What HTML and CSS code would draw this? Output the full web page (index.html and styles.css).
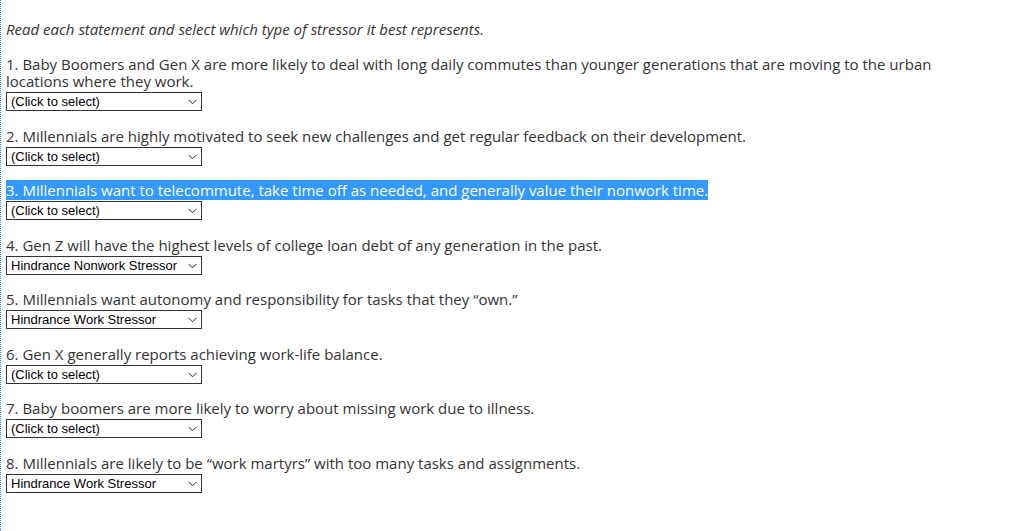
FILE: index.html
```html
<!DOCTYPE html>
<html lang="en">
<head>
  <meta charset="UTF-8" />
  <meta name="viewport" content="width=device-width, initial-scale=1.0" />
  <title>Stressor Types</title>
  <link rel="stylesheet" href="styles.css">
</head>
<body>
  <div class="question-area">
    <p class="intro">Read each statement and select which type of stressor it best represents.</p>

    <div class="question">
      <div class="q-text">1. Baby Boomers and Gen X are more likely to deal with long daily commutes than younger generations that are moving to the urban locations where they work.</div>
      <span class="dropdown">
        <select>
          <option selected>(Click to select)</option>
          <option>Challenge Work Stressor</option>
          <option>Hindrance Work Stressor</option>
          <option>Challenge Nonwork Stressor</option>
          <option>Hindrance Nonwork Stressor</option>
        </select>
        <svg class="chevron" width="9" height="6" viewBox="0 0 9 6"><path d="M0.5 0.8 L4.5 4.8 L8.5 0.8" fill="none" stroke="#222" stroke-width="1"/></svg>
      </span>
    </div>

    <div class="question">
      <div class="q-text">2. Millennials are highly motivated to seek new challenges and get regular feedback on their development.</div>
      <span class="dropdown">
        <select>
          <option selected>(Click to select)</option>
          <option>Challenge Work Stressor</option>
          <option>Hindrance Work Stressor</option>
          <option>Challenge Nonwork Stressor</option>
          <option>Hindrance Nonwork Stressor</option>
        </select>
        <svg class="chevron" width="9" height="6" viewBox="0 0 9 6"><path d="M0.5 0.8 L4.5 4.8 L8.5 0.8" fill="none" stroke="#222" stroke-width="1"/></svg>
      </span>
    </div>

    <div class="question">
      <div class="q-text"><span class="picked">3. Millennials want to telecommute, take time off as needed, and generally value their nonwork time.</span></div>
      <span class="dropdown">
        <select>
          <option selected>(Click to select)</option>
          <option>Challenge Work Stressor</option>
          <option>Hindrance Work Stressor</option>
          <option>Challenge Nonwork Stressor</option>
          <option>Hindrance Nonwork Stressor</option>
        </select>
        <svg class="chevron" width="9" height="6" viewBox="0 0 9 6"><path d="M0.5 0.8 L4.5 4.8 L8.5 0.8" fill="none" stroke="#222" stroke-width="1"/></svg>
      </span>
    </div>

    <div class="question">
      <div class="q-text">4. Gen Z will have the highest levels of college loan debt of any generation in the past.</div>
      <span class="dropdown">
        <select>
          <option>(Click to select)</option>
          <option>Challenge Work Stressor</option>
          <option>Hindrance Work Stressor</option>
          <option>Challenge Nonwork Stressor</option>
          <option selected>Hindrance Nonwork Stressor</option>
        </select>
        <svg class="chevron" width="9" height="6" viewBox="0 0 9 6"><path d="M0.5 0.8 L4.5 4.8 L8.5 0.8" fill="none" stroke="#222" stroke-width="1"/></svg>
      </span>
    </div>

    <div class="question">
      <div class="q-text">5. Millennials want autonomy and responsibility for tasks that they “own.”</div>
      <span class="dropdown">
        <select>
          <option>(Click to select)</option>
          <option>Challenge Work Stressor</option>
          <option selected>Hindrance Work Stressor</option>
          <option>Challenge Nonwork Stressor</option>
          <option>Hindrance Nonwork Stressor</option>
        </select>
        <svg class="chevron" width="9" height="6" viewBox="0 0 9 6"><path d="M0.5 0.8 L4.5 4.8 L8.5 0.8" fill="none" stroke="#222" stroke-width="1"/></svg>
      </span>
    </div>

    <div class="question">
      <div class="q-text">6. Gen X generally reports achieving work-life balance.</div>
      <span class="dropdown">
        <select>
          <option selected>(Click to select)</option>
          <option>Challenge Work Stressor</option>
          <option>Hindrance Work Stressor</option>
          <option>Challenge Nonwork Stressor</option>
          <option>Hindrance Nonwork Stressor</option>
        </select>
        <svg class="chevron" width="9" height="6" viewBox="0 0 9 6"><path d="M0.5 0.8 L4.5 4.8 L8.5 0.8" fill="none" stroke="#222" stroke-width="1"/></svg>
      </span>
    </div>

    <div class="question">
      <div class="q-text">7. Baby boomers are more likely to worry about missing work due to illness.</div>
      <span class="dropdown">
        <select>
          <option selected>(Click to select)</option>
          <option>Challenge Work Stressor</option>
          <option>Hindrance Work Stressor</option>
          <option>Challenge Nonwork Stressor</option>
          <option>Hindrance Nonwork Stressor</option>
        </select>
        <svg class="chevron" width="9" height="6" viewBox="0 0 9 6"><path d="M0.5 0.8 L4.5 4.8 L8.5 0.8" fill="none" stroke="#222" stroke-width="1"/></svg>
      </span>
    </div>

    <div class="question">
      <div class="q-text">8. Millennials are likely to be “work martyrs” with too many tasks and assignments.</div>
      <span class="dropdown">
        <select>
          <option>(Click to select)</option>
          <option>Challenge Work Stressor</option>
          <option selected>Hindrance Work Stressor</option>
          <option>Challenge Nonwork Stressor</option>
          <option>Hindrance Nonwork Stressor</option>
        </select>
        <svg class="chevron" width="9" height="6" viewBox="0 0 9 6"><path d="M0.5 0.8 L4.5 4.8 L8.5 0.8" fill="none" stroke="#222" stroke-width="1"/></svg>
      </span>
    </div>
  </div>
</body>
</html>
```

FILE: styles.css
```css
html, body {
  margin: 0;
  height: 100%;
  background: #fff;
}
body {
  font-family: 'Open Sans', Lato, sans-serif;
  font-size: 15px;
  color: #333;
}
.question-area {
  min-height: 100%;
  box-sizing: border-box;
  border-left: 1px dotted #2f7fd8;
  padding: 21px 30px 0 5px;
}
.intro {
  margin: 0 0 18px;
  line-height: 17px;
  font-style: italic;
}
.question {
  margin-bottom: 16.5px;
}
.q-text {
  line-height: 17px;
}
.picked {
  background-color: #3399ff;
  color: #fff;
}
.dropdown {
  position: relative;
  display: block;
  width: 196px;
  margin-top: 2px;
}
.dropdown select {
  display: block;
  width: 196px;
  height: 19px;
  margin: 0;
  padding: 0 0 0 4px;
  appearance: none;
  -webkit-appearance: none;
  font-family: 'Liberation Sans', Arial, sans-serif;
  font-size: 13px;
  color: #000;
  background: #fff;
  border: 1px solid #333;
  border-radius: 0;
}
.chevron {
  position: absolute;
  right: 5px;
  top: 7px;
  pointer-events: none;
}
```
